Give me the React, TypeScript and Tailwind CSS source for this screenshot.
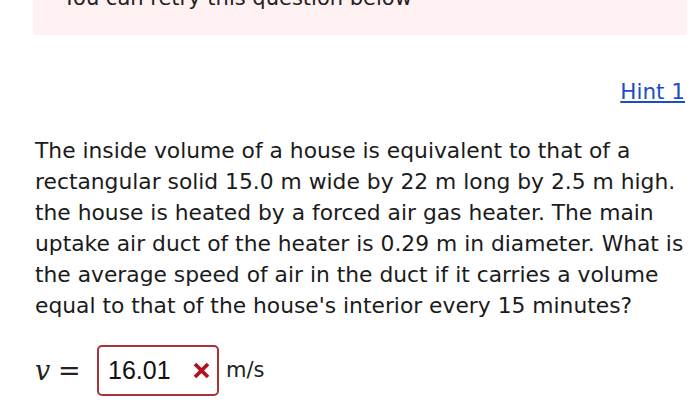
import React from "react";

const lines = [
  "The inside volume of a house is equivalent to that of a",
  "rectangular solid 15.0 m wide by 22 m long by 2.5 m high.",
  "the house is heated by a forced air gas heater. The main",
  "uptake air duct of the heater is 0.29 m in diameter. What is",
  "the average speed of air in the duct if it carries a volume",
  "equal to that of the house's interior every 15 minutes?",
];

const App: React.FC = () => {
  return (
    <div className="w-[700px] h-[404px] overflow-hidden bg-white" style={{ fontFamily: '"DejaVu Sans", sans-serif' }}>
      {/* feedback box (cut at top) */}
      <div className="ml-[33px] mr-[13px] h-[35px] bg-[#fff0f1] relative overflow-hidden">
        <p className="absolute left-[30px] bottom-[26px] text-[21px] leading-none text-[#222]">
          You can retry this question below
        </p>
      </div>

      {/* hint */}
      <div className="flex justify-end pr-[15px] pt-[44px]">
        <a href="#" className="text-[21.5px] leading-[26px] text-[#1a4ec9] underline underline-offset-2">
          Hint 1
        </a>
      </div>

      {/* question */}
      <p className="mt-[30px] pl-[35px] text-[21.8px] leading-[31px] text-[#1b1b1b] whitespace-nowrap">
        {lines.map((l, i) => (
          <React.Fragment key={i}>
            {l}
            {i < lines.length - 1 && <br />}
          </React.Fragment>
        ))}
      </p>

      {/* answer */}
      <div className="flex items-center mt-[24px] pl-[35px]">
        <span className="w-[23px] text-[27px] leading-none italic text-[#222]" style={{ fontFamily: '"DejaVu Serif", serif' }}>v</span>
        <span className="w-[39px] text-[27px] leading-none text-[#222]" style={{ fontFamily: '"DejaVu Serif", serif' }}>=</span>
        <div className="flex items-center h-[51px] w-[122px] border-2 border-[#a83239] rounded-[5px] pl-[9px]">
          <span className="text-[25px] text-[#111]" style={{ fontFamily: '"Liberation Sans", sans-serif' }}>16.01</span>
          <svg className="ml-[22px]" width="17" height="17" viewBox="0 0 17 17">
            <path d="M2 2 L15 15 M15 2 L2 15" stroke="#b3121d" strokeWidth="3.8" strokeLinecap="butt" />
          </svg>
        </div>
        <span className="ml-[7px] text-[21px] text-[#222]">m/s</span>
      </div>
    </div>
  );
};

export default App;
